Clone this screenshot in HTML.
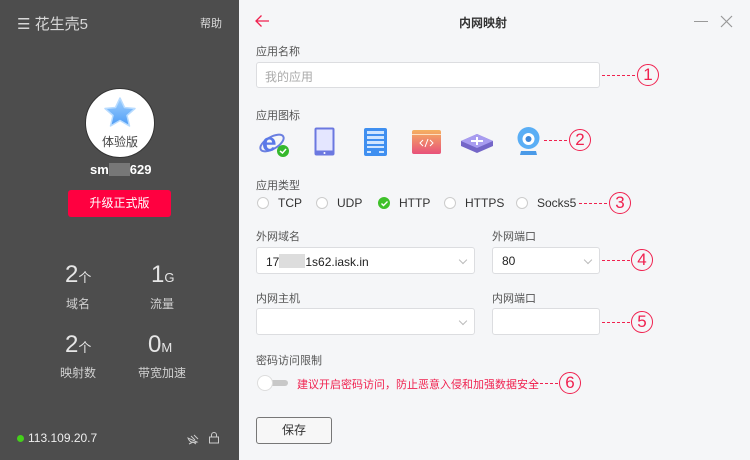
<!DOCTYPE html>
<html><head><meta charset="utf-8"><style>
*{margin:0;padding:0;box-sizing:border-box}
body{width:750px;height:460px;overflow:hidden;position:relative;background:#f5f6f8;font-family:"Liberation Sans","Noto Sans CJK SC",sans-serif;font-size:12px;color:#333}
.a{position:absolute;white-space:nowrap}
#left{position:absolute;left:0;top:0;width:239px;height:460px;background:#4d4d4d;color:#eee}
.lbl{font-size:11px;color:#555}
.inp{position:absolute;background:#fff;border:1px solid #dcdde0;border-radius:3px}
.chev{position:absolute;right:8px;top:9px;width:6px;height:6px;border-right:1px solid #bbb;border-bottom:1px solid #bbb;transform:rotate(45deg)}
.num{position:absolute;width:22px;height:22px;border:1px solid #f0214f;border-radius:50%;color:#f0214f;font-size:17px;text-align:center;line-height:20px;font-weight:300}
.dash{position:absolute;height:1px;background:repeating-linear-gradient(90deg,#f0214f 0 3px,transparent 3px 5px)}
.rad{position:absolute;width:12px;height:12px;border:1px solid #ccc;border-radius:50%;background:#fff}
.big{font-size:24px;color:#e6e6e6}
.big small{font-size:13px}
.sl{font-size:12px;color:#d0d0d0}
</style></head><body>
<div id="left">
 <div class="a" style="left:17px;top:13px;font-size:15px;color:#d8d8d8">☰ 花生壳5</div>
 <div class="a" style="left:200px;top:15px;font-size:11px;color:#ddd">帮助</div>
 <div class="a" style="left:85px;top:88px;width:70px;height:70px;border-radius:50%;background:#fff;border:1px solid #333"></div>
 <svg class="a" style="left:103px;top:96px" width="34" height="32" viewBox="0 0 34 32"><defs><linearGradient id="g" x1="0" y1="0" x2="0" y2="1"><stop offset="0" stop-color="#9fd0ff"/><stop offset="1" stop-color="#4e9cf5"/></linearGradient></defs><path d="M17 2 L21.5 11.5 L32 12.5 L24 19.5 L26.5 30 L17 24.5 L7.5 30 L10 19.5 L2 12.5 L12.5 11.5Z" fill="url(#g)" stroke="#b9dcff" stroke-width="1.5" stroke-linejoin="round"/></svg>
 <div class="a" style="left:102px;top:133px;font-size:12px;color:#444">体验版</div>
 <div class="a" style="left:90px;top:162px;font-size:13px;font-weight:bold;color:#fff">sm<span style="display:inline-block;width:21px;height:13px;background:#777;vertical-align:-2px"></span>629</div>
 <div class="a" style="left:68px;top:190px;width:103px;height:27px;background:#ff0040;border-radius:3px;color:#fff;font-size:12px;text-align:center;line-height:27px">升级正式版</div>
 <div class="a big" style="left:65px;top:261px">2<small>个</small></div>
 <div class="a sl" style="left:66px;top:295px">域名</div>
 <div class="a big" style="left:151px;top:261px">1<small>G</small></div>
 <div class="a sl" style="left:150px;top:295px">流量</div>
 <div class="a big" style="left:65px;top:331px">2<small>个</small></div>
 <div class="a sl" style="left:60px;top:364px">映射数</div>
 <div class="a big" style="left:148px;top:331px">0<small>M</small></div>
 <div class="a sl" style="left:138px;top:364px">带宽加速</div>
 <div class="a" style="left:17px;top:435px;width:7px;height:7px;border-radius:50%;background:#44d01a"></div>
 <div class="a" style="left:28px;top:431px;font-size:12px;color:#eee">113.109.20.7</div>
 <svg class="a" style="left:186px;top:432px" width="14" height="13" viewBox="0 0 14 13" fill="none" stroke="#ccc" stroke-width="1"><path d="M2 6 Q4 12 11 10 Z M5 4 L9 8 M8 3 L12 7 M3 12 L7 10 L10 12"/></svg>
 <svg class="a" style="left:208px;top:431px" width="12" height="13" viewBox="0 0 12 13" fill="none" stroke="#ccc" stroke-width="1"><rect x="1.5" y="6" width="9" height="6"/><path d="M3.5 6 V4 A2.5 2.5 0 0 1 8.5 4 V6"/></svg>
</div>

<svg class="a" style="left:254px;top:14px" width="16" height="14" viewBox="0 0 16 14" fill="none" stroke="#f0214f" stroke-width="1.3"><path d="M15 7 H2 M7.5 1.5 L2 7 L7.5 12.5"/></svg>
<div class="a" style="left:459px;top:14px;font-size:12px;color:#333;font-weight:600">内网映射</div>
<div class="a" style="left:694px;top:21px;width:14px;border-top:1px solid #999"></div>
<svg class="a" style="left:720px;top:15px" width="13" height="13" viewBox="0 0 13 13" stroke="#999" stroke-width="1.2"><path d="M1 1 L12 12 M12 1 L1 12"/></svg>

<div class="a lbl" style="left:256px;top:43px">应用名称</div>
<div class="inp" style="left:256px;top:62px;width:344px;height:26px"><span class="a" style="left:8px;top:5px;color:#aaa;font-size:12px">我的应用</span></div>
<div class="dash" style="left:602px;top:75px;width:35px"></div>
<div class="num" style="left:637px;top:64px">1</div>

<div class="a lbl" style="left:256px;top:107px">应用图标</div>
<svg class="a" style="left:258px;top:126px" width="32" height="32" viewBox="0 0 32 32"><ellipse cx="14" cy="17" rx="13" ry="6" fill="none" stroke="#6b7fe0" stroke-width="2" transform="rotate(-30 14 17)"/><text x="4" y="25" font-size="26" font-family="Liberation Sans" fill="#5b79e8" font-weight="bold">e</text><circle cx="25" cy="25" r="6" fill="#35b82c"/><path d="M22 25 L24.5 27 L28 23" stroke="#fff" stroke-width="1.5" fill="none"/></svg>
<svg class="a" style="left:314px;top:127px" width="21" height="29" viewBox="0 0 21 29"><rect x="0.5" y="0.5" width="20" height="28" rx="2" fill="#6b78e0"/><rect x="2.5" y="2.5" width="16" height="21" fill="#e4e6ff"/><circle cx="10.5" cy="26" r="1" fill="#fff"/></svg>
<svg class="a" style="left:364px;top:128px" width="23" height="28" viewBox="0 0 23 28"><rect width="23" height="28" rx="2" fill="#3f8ff0"/><g fill="#cfe5ff"><rect x="3" y="3" width="17" height="3"/><rect x="3" y="8" width="17" height="3"/><rect x="3" y="13" width="17" height="3"/><rect x="3" y="18" width="17" height="2"/></g><rect x="3" y="23" width="4" height="2" fill="#cfe5ff"/><rect x="15" y="23" width="5" height="2" fill="#cfe5ff"/></svg>
<svg class="a" style="left:412px;top:130px" width="29" height="24" viewBox="0 0 29 24"><defs><linearGradient id="c" x1="0" y1="0" x2="0" y2="1"><stop offset="0" stop-color="#f5b160"/><stop offset="1" stop-color="#e8517a"/></linearGradient></defs><rect width="29" height="24" rx="2" fill="url(#c)"/><rect x="0" y="4" width="29" height="1" fill="#fde0c0"/><path d="M11 10 L8 13 L11 16 M18 10 L21 13 L18 16 M16 9 L13 17" stroke="#fff" stroke-width="1" fill="none"/></svg>
<svg class="a" style="left:460px;top:132px" width="34" height="22" viewBox="0 0 34 22"><path d="M1 9 L17 2 L33 9 L33 14 L17 21 L1 14Z" fill="#7466c8"/><path d="M1 9 L17 2 L33 9 L17 16Z" fill="#a89cf0"/><path d="M17 5 V13 M11 9 H23" stroke="#fff" stroke-width="2"/></svg>
<svg class="a" style="left:516px;top:126px" width="25" height="30" viewBox="0 0 25 30"><circle cx="12.5" cy="12" r="11" fill="#5aaef5"/><circle cx="12.5" cy="13" r="6" fill="#fff"/><circle cx="12.5" cy="13" r="3" fill="#3c86d8"/><path d="M5 25 H20 L21 29 H4Z" fill="#4a9ae8"/></svg>
<div class="dash" style="left:544px;top:140px;width:25px"></div>
<div class="num" style="left:569px;top:129px">2</div>

<div class="a lbl" style="left:256px;top:177px">应用类型</div>
<div class="rad" style="left:257px;top:197px"></div><div class="a" style="left:278px;top:196px">TCP</div>
<div class="rad" style="left:316px;top:197px"></div><div class="a" style="left:337px;top:196px">UDP</div>
<div class="rad" style="left:378px;top:197px;background:#3fc12a;border-color:#3fc12a"></div><svg class="a" style="left:380px;top:199px" width="9" height="9"><path d="M1.5 4.5 L3.5 6.5 L7.5 2.5" stroke="#fff" stroke-width="1.4" fill="none"/></svg><div class="a" style="left:399px;top:196px">HTTP</div>
<div class="rad" style="left:444px;top:197px"></div><div class="a" style="left:465px;top:196px">HTTPS</div>
<div class="rad" style="left:516px;top:197px"></div><div class="a" style="left:537px;top:196px">Socks5</div>
<div class="dash" style="left:579px;top:203px;width:30px"></div>
<div class="num" style="left:609px;top:192px">3</div>

<div class="a lbl" style="left:256px;top:228px">外网域名</div>
<div class="a lbl" style="left:492px;top:228px">外网端口</div>
<div class="inp" style="left:256px;top:247px;width:219px;height:27px"><span class="a" style="left:9px;top:6px;color:#222">17<span style="display:inline-block;width:26px;height:14px;background:#ddd;vertical-align:-2px"></span>1s62.iask.in</span><div class="chev"></div></div>
<div class="inp" style="left:492px;top:247px;width:108px;height:27px"><span class="a" style="left:9px;top:6px;color:#222">80</span><div class="chev"></div></div>
<div class="dash" style="left:602px;top:260px;width:29px"></div>
<div class="num" style="left:631px;top:249px">4</div>

<div class="a lbl" style="left:256px;top:290px">内网主机</div>
<div class="a lbl" style="left:492px;top:290px">内网端口</div>
<div class="inp" style="left:256px;top:308px;width:219px;height:27px"><div class="chev"></div></div>
<div class="inp" style="left:492px;top:308px;width:108px;height:27px"></div>
<div class="dash" style="left:602px;top:322px;width:29px"></div>
<div class="num" style="left:631px;top:311px">5</div>

<div class="a lbl" style="left:256px;top:352px">密码访问限制</div>
<div class="a" style="left:263px;top:380px;width:25px;height:6px;border-radius:3px;background:#c8c8c8"></div>
<div class="a" style="left:257px;top:375px;width:16px;height:16px;border-radius:50%;background:#fff;border:1px solid #ddd"></div>
<div class="a" style="left:297px;top:376px;font-size:11px;color:#f0214f">建议开启密码访问，防止恶意入侵和加强数据安全</div>
<div class="dash" style="left:530px;top:383px;width:29px"></div>
<div class="num" style="left:559px;top:372px">6</div>

<div class="a" style="left:256px;top:417px;width:76px;height:27px;border:1px solid #777;border-radius:3px;background:#f7f7f7;text-align:center;line-height:25px;font-size:12px;color:#333">保存</div>
</body></html>
